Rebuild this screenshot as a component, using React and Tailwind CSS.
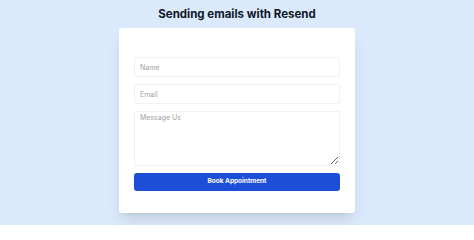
import React from 'react'

const App = () => {
  return (
    <div className="w-full h-[225px] bg-[#dae9fb] flex flex-col items-center font-['Inter',sans-serif]">
      <h1 className="h-[28px] pt-[2px] flex items-center text-[11.5px] font-bold text-[#111827]">
        Sending emails with Resend
      </h1>
      <div className="w-[236px] bg-white rounded-[3px] shadow-lg px-[15px] pt-[29px] pb-[22px]">
        <form className="flex flex-col gap-[7px]">
          <input
            type="text"
            placeholder="Name"
            className="h-[20px] w-full border border-[#f0f1f3] rounded-[2px] px-[5px] text-[7px] placeholder:text-[#a3a3a3] outline-none"
          />
          <input
            type="email"
            placeholder="Email"
            className="h-[20px] w-full border border-[#f0f1f3] rounded-[2px] px-[5px] text-[7px] placeholder:text-[#a3a3a3] outline-none"
          />
          <textarea
            placeholder="Message Us"
            className="h-[55px] w-full border border-[#f0f1f3] rounded-[2px] px-[5px] py-[1px] text-[7px] placeholder:text-[#a3a3a3] outline-none block"
          />
          <button
            type="button"
            className="h-[18px] w-full bg-[#1d4ed8] text-white rounded-[3px] text-[6.5px] font-bold"
          >
            Book Appointment
          </button>
        </form>
      </div>
    </div>
  )
}

export default App
